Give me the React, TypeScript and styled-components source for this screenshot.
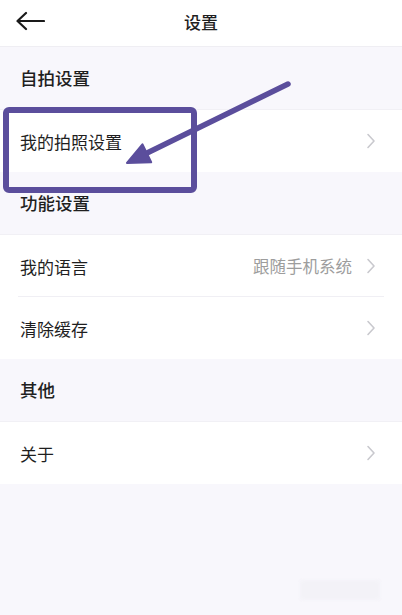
import React from 'react';
import styled, { createGlobalStyle } from 'styled-components';

const GlobalStyle = createGlobalStyle`
  html, body {
    margin: 0;
    padding: 0;
    background: #f8f7fc;
  }
  * {
    box-sizing: border-box;
  }
`;

const Page = styled.div`
  position: relative;
  width: 402px;
  min-height: 615px;
  background: #f8f7fc;
  font-family: "Noto Sans CJK SC", "Noto Sans", sans-serif;
  color: #1f1f1f;
  overflow: hidden;
`;

const Header = styled.header`
  height: 47px;
  display: grid;
  grid-template-columns: 60px 1fr 60px;
  align-items: center;
  padding-bottom: 4px;
  background: #ffffff;
  border-bottom: 1px solid #efeef3;
`;

const BackButton = styled.div`
  display: flex;
  align-items: center;
  padding-left: 15px;
  height: 100%;
`;

const Title = styled.h1`
  margin: 0;
  text-align: center;
  font-size: 17px;
  font-weight: 500;
  color: #1f1f1f;
`;

const SectionTitle = styled.div`
  height: 63px;
  display: flex;
  align-items: center;
  padding-left: 20px;
  padding-bottom: 2px;
  font-size: 17.5px;
  font-weight: 500;
  color: #1f1f1f;
  border-bottom: 1px solid #f1f0f5;
`;

const Group = styled.div`
  background: #ffffff;
`;

const Row = styled.div<{ $divider?: boolean }>`
  height: 62px;
  display: flex;
  align-items: center;
  padding: 0 26px 0 20px;
  position: relative;
  &::after {
    content: '';
    display: ${p => (p.$divider ? 'block' : 'none')};
    position: absolute;
    left: 18px;
    right: 18px;
    bottom: 0;
    height: 1px;
    background: #f0eff4;
  }
`;

const RowLabel = styled.span`
  flex: 1;
  font-size: 17px;
  color: #1f1f1f;
`;

const RowValue = styled.span`
  font-size: 16.5px;
  color: #9d9d9d;
  margin-right: 14px;
`;

const Watermark = styled.div`
  position: absolute;
  right: 22px;
  bottom: 15px;
  width: 80px;
  height: 20px;
  background: #f3f2f7;
  border-radius: 2px;
  filter: blur(1.5px);
`;

const Overlay = styled.svg`
  position: absolute;
  top: 0;
  left: 0;
  pointer-events: none;
`;

const Chevron = () => (
  <svg width="10" height="16" viewBox="0 0 10 16">
    <path d="M2 1.5 L8 8 L2 14.5" fill="none" stroke="#c9c9ce" strokeWidth="1.6" strokeLinecap="round" strokeLinejoin="round" />
  </svg>
);

const BackArrow = () => (
  <svg width="30" height="20" viewBox="0 0 30 20">
    <path d="M29 10 H3 M11 2 L2.5 10 L11 18" fill="none" stroke="#1a1a1a" strokeWidth="2.2" strokeLinecap="round" strokeLinejoin="round" />
  </svg>
);

const App: React.FC = () => {
  return (
    <Page>
      <GlobalStyle />
      <Header>
        <BackButton>
          <BackArrow />
        </BackButton>
        <Title>设置</Title>
        <div />
      </Header>

      <SectionTitle>自拍设置</SectionTitle>
      <Group>
        <Row>
          <RowLabel>我的拍照设置</RowLabel>
          <Chevron />
        </Row>
      </Group>

      <SectionTitle>功能设置</SectionTitle>
      <Group>
        <Row $divider>
          <RowLabel>我的语言</RowLabel>
          <RowValue>跟随手机系统</RowValue>
          <Chevron />
        </Row>
        <Row>
          <RowLabel>清除缓存</RowLabel>
          <Chevron />
        </Row>
      </Group>

      <SectionTitle>其他</SectionTitle>
      <Group>
        <Row>
          <RowLabel>关于</RowLabel>
          <Chevron />
        </Row>
      </Group>

      <Watermark />

      <Overlay width="402" height="615" viewBox="0 0 402 615">
        <rect x="6" y="110" width="188" height="80" rx="3" fill="none" stroke="#5b4e9c" strokeWidth="6" />
        <line x1="288" y1="84" x2="145" y2="154" stroke="#5b4e9c" strokeWidth="5.5" strokeLinecap="round" />
        <polygon points="127,163 142.4,144.3 151.2,162.3" fill="#5b4e9c" stroke="#5b4e9c" strokeWidth="2" strokeLinejoin="round" />
      </Overlay>
    </Page>
  );
};

export default App;
